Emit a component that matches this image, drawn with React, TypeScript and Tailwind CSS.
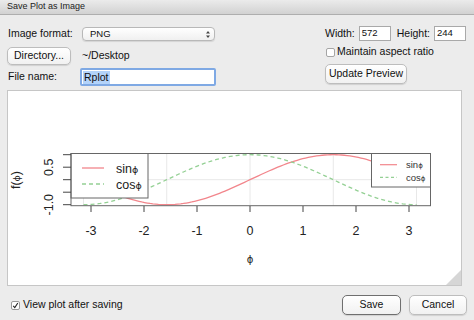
import React from "react";

const FONT = { fontFamily: '"Liberation Sans", Arial, sans-serif' };
const PHI = '"DejaVu Sans", sans-serif';

// plot coordinates (page pixels)
const px = (t: number) => 250 + 53 * t;
const py = (v: number) => 180.7 - 25 * v;

function curve(fn: (t: number) => number) {
  const pts: string[] = [];
  for (let i = 0; i <= 120; i++) {
    const t = -Math.PI + (2 * Math.PI * i) / 120;
    pts.push(`${i === 0 ? "M" : "L"}${px(t).toFixed(2)},${py(fn(t)).toFixed(2)}`);
  }
  return pts.join(" ");
}

function Plot() {
  const xt = [-3, -2, -1, 0, 1, 2, 3];
  const yt = [-1, -0.5, 0, 0.5, 1];
  const grid = [-Math.PI, -Math.PI / 2, 0, Math.PI / 2, Math.PI];
  return (
    <svg width="453" height="194" viewBox="8 92 453 194" style={{ fontFamily: '"Liberation Sans", Arial, sans-serif' }}>
      <rect x="8" y="92" width="453" height="194" fill="#fff" />
      {grid.map((g) => (
        <line key={g} x1={px(g)} y1="155" x2={px(g)} y2="206.5" stroke="#e8e8e8" strokeWidth="1" />
      ))}
      <line x1="71" y1={py(0)} x2="430.5" y2={py(0)} stroke="#e8e8e8" strokeWidth="1" />
      <path d={curve(Math.sin)} fill="none" stroke="#f2868c" strokeWidth="1.3" />
      <path d={curve(Math.cos)} fill="none" stroke="#94d094" strokeWidth="1.3" strokeDasharray="4 3" />
      {/* legends */}
      <rect x="71" y="154.5" width="77" height="44.5" fill="#fff" stroke="#666" strokeWidth="1" />
      <line x1="82" y1="169" x2="104" y2="169" stroke="#f2868c" strokeWidth="1.3" />
      <line x1="82" y1="185" x2="104" y2="185" stroke="#94d094" strokeWidth="1.3" strokeDasharray="4 3" />
      <text x="116" y="173.5" fontSize="12.5" fill="#222">
        sin<tspan fontSize="9.5" fontFamily={PHI}>ϕ</tspan>
      </text>
      <text x="116" y="189.5" fontSize="12.5" fill="#222">
        cos<tspan fontSize="9.5" fontFamily={PHI}>ϕ</tspan>
      </text>
      <rect x="371.5" y="154.5" width="59" height="33.5" fill="#fff" stroke="#666" strokeWidth="1" />
      <line x1="380" y1="165.7" x2="397" y2="165.7" stroke="#f2868c" strokeWidth="1.2" />
      <line x1="380" y1="178.3" x2="397" y2="178.3" stroke="#94d094" strokeWidth="1.2" strokeDasharray="3 2.5" />
      <text x="406" y="169" fontSize="9.5" fill="#333">
        sin<tspan fontSize="7" fontFamily={PHI}>ϕ</tspan>
      </text>
      <text x="406" y="181.5" fontSize="9.5" fill="#333">
        cos<tspan fontSize="7" fontFamily={PHI}>ϕ</tspan>
      </text>
      {/* axes box */}
      <rect x="71" y="154.5" width="359.5" height="52.2" fill="none" stroke="#666" strokeWidth="1" />
      {xt.map((t) => (
        <g key={t}>
          <line x1={px(t)} y1="207" x2={px(t)} y2="213" stroke="#444" strokeWidth="1" />
          <text x={px(t)} y="235.5" fontSize="12.5" textAnchor="middle" fill="#222">
            {t}
          </text>
        </g>
      ))}
      {yt.map((v) => (
        <line key={v} x1="63" y1={py(v)} x2="71" y2={py(v)} stroke="#444" strokeWidth="1" />
      ))}
      <text x="0" y="0" fontSize="12.5" textAnchor="middle" fill="#222" transform={`translate(52.5 ${py(0.5)}) rotate(-90)`}>
        0.5
      </text>
      <text x="0" y="0" fontSize="12.5" textAnchor="middle" fill="#222" transform={`translate(52.5 ${py(-1)}) rotate(-90)`}>
        -1.0
      </text>
      <text x="0" y="0" fontSize="12.5" textAnchor="middle" fill="#222" transform="translate(20 181) rotate(-90)">
        f(<tspan fontSize="9.5" fontFamily={PHI}>ϕ</tspan>)
      </text>
      <text x="250" y="264" fontSize="10" textAnchor="middle" fill="#222" fontFamily={PHI}>
        ϕ
      </text>
      {/* resize grip */}
      <path d="M461 271 L461 286 L446 286 Z" fill="#d6d6d6" />
    </svg>
  );
}

function Button({ children, className }: { children: React.ReactNode; className: string }) {
  return (
    <div
      className={`flex items-center justify-center rounded-[5px] border bg-gradient-to-b from-white to-[#f1f1f1] text-[10.5px] text-[#111] shadow-[0_1px_1px_rgba(0,0,0,0.12)] ${className}`}
    >
      {children}
    </div>
  );
}

export default function App() {
  return (
    <div className="w-[474px] h-[320px] bg-[#ececec] flex flex-col overflow-hidden text-[#111]" style={FONT}>
      <div className="h-[15px] shrink-0 bg-gradient-to-b from-[#ebebeb] to-[#d2d2d2] border-b border-[#aeaeae] flex items-center pl-[7px] text-[9px] text-[#222]">
        Save Plot as Image
      </div>

      <div className="flex h-[75px] shrink-0">
        <div className="w-[318px] flex flex-col pl-[7px]">
          <div className="flex items-center mt-[12px] h-[14px]">
            <span className="w-[75px] pl-[1px] text-[10.5px]">Image format:</span>
            <div className="w-[133px] h-[13.5px] rounded-[4px] border border-[#b8b8b8] bg-gradient-to-b from-white to-[#f0f0f0] shadow-[0_1px_1px_rgba(0,0,0,0.1)] flex items-center justify-between pl-[7px] pr-[3px] text-[9.5px]">
              <span>PNG</span>
              <svg width="6" height="9" viewBox="0 0 6 9">
                <path d="M1 3.5 L3 1 L5 3.5 Z M1 5.5 L3 8 L5 5.5 Z" fill="#444" />
              </svg>
            </div>
          </div>
          <div className="flex items-center mt-[6px] h-[18px]">
            <Button className="w-[64px] h-[18px] border-[#bdbdbd]">Directory...</Button>
            <span className="ml-[11px] text-[10.5px]">~/Desktop</span>
          </div>
          <div className="flex items-center mt-[3px] h-[18px]">
            <span className="w-[73px] pl-[1px] text-[10.5px]">File name:</span>
            <div className="w-[136px] h-[17.5px] border-2 border-[#7fa9e4] rounded-[2px] bg-white flex items-center pl-[1px] text-[10.5px]">
              <span className="bg-[#b3d3fa] px-[1px] leading-[13px]">Rplot</span>
            </div>
          </div>
        </div>

        <div className="flex flex-col pl-[7px]">
          <div className="flex items-center mt-[11px] h-[15px] text-[10.5px]">
            <span>Width:</span>
            <div className="ml-[4px] w-[32px] h-[15px] border border-[#a9a9a9] bg-white flex items-center pl-[2px] text-[9.5px]">572</div>
            <span className="ml-[6px]">Height:</span>
            <div className="ml-[4px] w-[32px] h-[15px] border border-[#a9a9a9] bg-white flex items-center pl-[2px] text-[9.5px]">244</div>
          </div>
          <div className="flex items-center mt-[6px] h-[10px] text-[10.5px]">
            <div className="w-[9px] h-[9px] ml-[1px] rounded-[2px] border border-[#a5a5a5] bg-white" />
            <span className="ml-[2px]">Maintain aspect ratio</span>
          </div>
          <Button className="mt-[7px] w-[82px] h-[20px] border-[#bdbdbd]">Update Preview</Button>
        </div>
      </div>

      <div className="ml-[7px] w-[455px] h-[196px] border border-[#c6c6c6] bg-white shrink-0">
        <Plot />
      </div>

      <div className="flex items-center mt-[9px] h-[20px]">
        <div className="ml-[11px] w-[9px] h-[9px] rounded-[2px] border border-[#9a9a9a] bg-white flex items-center justify-center">
          <svg width="7" height="7" viewBox="0 0 7 7">
            <path d="M1.2 3.8 L2.8 5.6 L5.8 1" fill="none" stroke="#222" strokeWidth="1.1" />
          </svg>
        </div>
        <span className="ml-[3px] text-[10.5px]">View plot after saving</span>
        <div className="flex-1" />
        <Button className="w-[59px] h-[19.5px] border-[#6f6f6f]">Save</Button>
        <Button className="ml-[8px] mr-[7px] w-[58px] h-[19.5px] border-[#bdbdbd]">Cancel</Button>
      </div>
    </div>
  );
}
